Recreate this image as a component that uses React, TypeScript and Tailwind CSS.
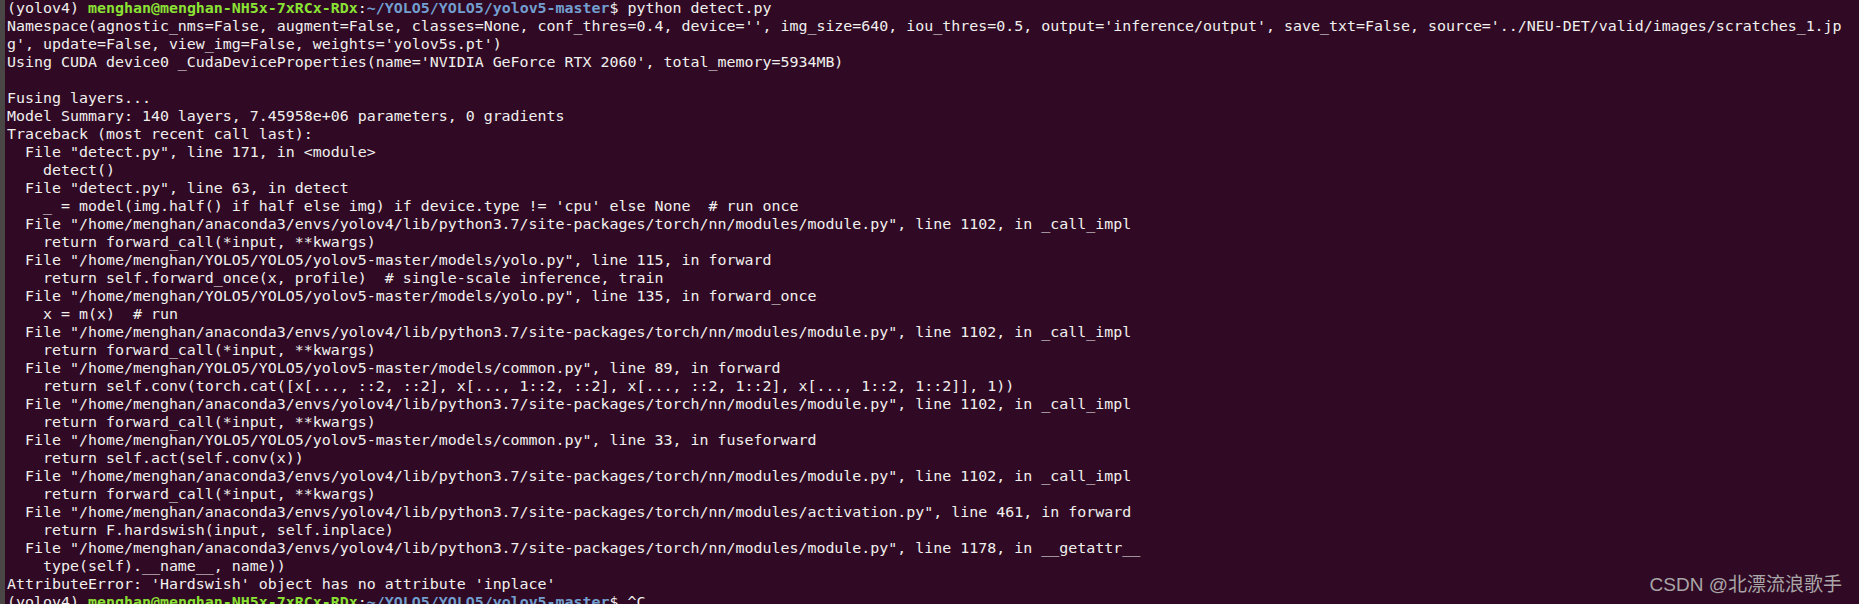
const mod = '  File "/home/menghan/anaconda3/envs/yolov4/lib/python3.7/site-packages/torch/nn/modules/module.py", line 1102, in _call_impl';
const fwd = '    return forward_call(*input, **kwargs)';

const lines: string[] = [
  "Namespace(agnostic_nms=False, augment=False, classes=None, conf_thres=0.4, device='', img_size=640, iou_thres=0.5, output='inference/output', save_txt=False, source='../NEU-DET/valid/images/scratches_1.jp",
  "g', update=False, view_img=False, weights='yolov5s.pt')",
  "Using CUDA device0 _CudaDeviceProperties(name='NVIDIA GeForce RTX 2060', total_memory=5934MB)",
  '',
  'Fusing layers...',
  'Model Summary: 140 layers, 7.45958e+06 parameters, 0 gradients',
  'Traceback (most recent call last):',
  '  File "detect.py", line 171, in <module>',
  '    detect()',
  '  File "detect.py", line 63, in detect',
  "    _ = model(img.half() if half else img) if device.type != 'cpu' else None  # run once",
  mod,
  fwd,
  '  File "/home/menghan/YOLO5/YOLO5/yolov5-master/models/yolo.py", line 115, in forward',
  '    return self.forward_once(x, profile)  # single-scale inference, train',
  '  File "/home/menghan/YOLO5/YOLO5/yolov5-master/models/yolo.py", line 135, in forward_once',
  '    x = m(x)  # run',
  mod,
  fwd,
  '  File "/home/menghan/YOLO5/YOLO5/yolov5-master/models/common.py", line 89, in forward',
  '    return self.conv(torch.cat([x[..., ::2, ::2], x[..., 1::2, ::2], x[..., ::2, 1::2], x[..., 1::2, 1::2]], 1))',
  mod,
  fwd,
  '  File "/home/menghan/YOLO5/YOLO5/yolov5-master/models/common.py", line 33, in fuseforward',
  '    return self.act(self.conv(x))',
  mod,
  fwd,
  '  File "/home/menghan/anaconda3/envs/yolov4/lib/python3.7/site-packages/torch/nn/modules/activation.py", line 461, in forward',
  '    return F.hardswish(input, self.inplace)',
  '  File "/home/menghan/anaconda3/envs/yolov4/lib/python3.7/site-packages/torch/nn/modules/module.py", line 1178, in __getattr__',
  '    type(self).__name__, name))',
  "AttributeError: 'Hardswish' object has no attribute 'inplace'",
];

function Prompt({ cmd }: { cmd: string }) {
  return (
    <div className="h-[18px]">
      (yolov4) <span className="font-bold text-[#8ae234]">menghan@menghan-NH5x-7xRCx-RDx</span>:
      <span className="font-bold text-[#729fcf]">~/YOLO5/YOLO5/yolov5-master</span>${cmd}
    </div>
  );
}

export default function App() {
  return (
    <div className="relative flex h-[604px] w-full overflow-hidden bg-[#300a24]">
      <div className="w-[5px] shrink-0 bg-[#4a4646]" />
      <div
        className="-mt-[1px] pl-[2px] text-[14.95px] leading-[18px] whitespace-pre text-[#f0f0ee]"
        style={{ fontFamily: '"DejaVu Sans Mono", "Liberation Mono", monospace' }}
      >
        <Prompt cmd=" python detect.py" />
        {lines.map((l, i) => (
          <div key={i} className="h-[18px]">
            {l}
          </div>
        ))}
        <Prompt cmd=" ^C" />
      </div>
      <div
        className="absolute right-[17px] bottom-[10px] text-[19px] leading-none text-[#aaa6a8]"
        style={{ fontFamily: '"Liberation Sans", "Noto Sans CJK SC", sans-serif' }}
      >
        CSDN @北漂流浪歌手
      </div>
    </div>
  );
}
